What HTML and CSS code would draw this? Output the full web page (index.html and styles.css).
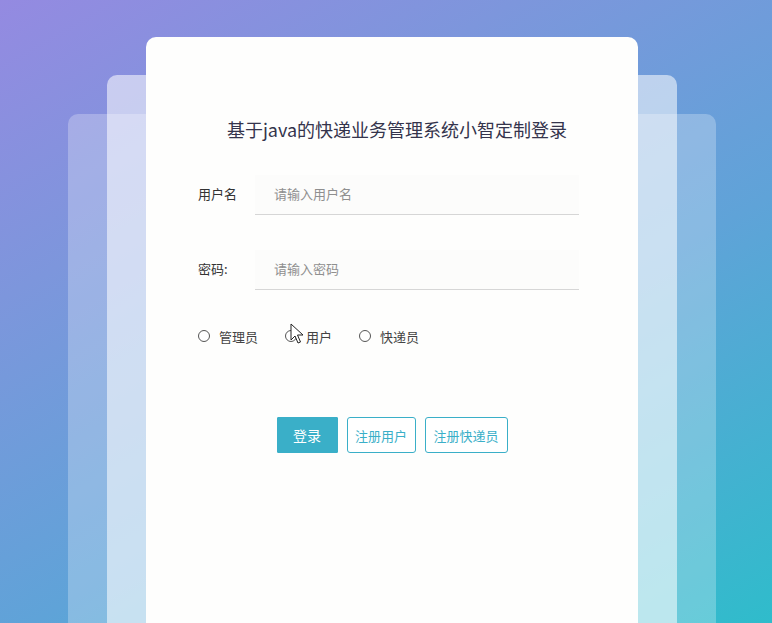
FILE: index.html
```html
<!DOCTYPE html>
<html lang="zh-CN">
<head>
<meta charset="utf-8">
<title>登录</title>
<link rel="stylesheet" href="styles.css">
</head>
<body>
<div class="page">
  <div class="stack">
    <div class="layer layer-back"></div>
    <div class="layer layer-mid"></div>
    <div class="card">
      <h1 class="title">基于java的快递业务管理系统小智定制登录</h1>
      <form class="form">
        <div class="field">
          <label class="label">用户名</label>
          <input class="input" type="text" placeholder="请输入用户名">
        </div>
        <div class="field">
          <label class="label">密码:</label>
          <input class="input" type="password" placeholder="请输入密码">
        </div>
        <div class="roles">
          <label class="role"><span class="radio"></span><span>管理员</span></label>
          <label class="role"><span class="radio"></span><span>用户</span></label>
          <label class="role"><span class="radio"></span><span>快递员</span></label>
        </div>
        <div class="actions">
          <button type="button" class="btn btn-primary">登录</button>
          <button type="button" class="btn btn-outline btn-user">注册用户</button>
          <button type="button" class="btn btn-outline btn-courier">注册快递员</button>
        </div>
      </form>
    </div>
  </div>
  <svg class="cursor" width="14" height="22" viewBox="0 0 14 22"><path d="M1 1 L1 17 L5 13 L8 20 L10.5 19 L7.5 12 L13 12 Z" fill="#fff" stroke="#222" stroke-width="1" stroke-linejoin="round"/></svg>
</div>
</body>
</html>
```
FILE: styles.css
```css
html, body {
  margin: 0;
  padding: 0;
  height: 100%;
}
body {
  font-family: "Noto Sans CJK SC", "Noto Sans", sans-serif;
  background: linear-gradient(150deg, #948ae1 0%, #7d96dc 28%, #5fa3d8 60%, #2fbccb 100%);
  overflow: hidden;
}
.page {
  position: relative;
  height: 623px;
  overflow: hidden;
}
.stack {
  position: relative;
  width: 492px;
  margin-left: 146px;
  padding-top: 37px;
}
.layer {
  position: absolute;
  border-radius: 10px;
  height: 700px;
}
.layer-back {
  left: -78px;
  top: 114px;
  width: 648px;
  background: rgba(255, 255, 255, 0.26);
}
.layer-mid {
  left: -39px;
  top: 75px;
  width: 570px;
  background: rgba(255, 255, 255, 0.55);
}
.card {
  position: relative;
  background: #fefefd;
  border-radius: 10px;
  height: 640px;
}
.title {
  margin: 0;
  padding: 80px 0 0 10px;
  text-align: center;
  font-size: 18px;
  line-height: 24px;
  font-weight: 400;
  color: #34344c;
}
.form {
  padding: 34px 0 0 52px;
}
.field {
  display: flex;
  align-items: center;
  height: 40px;
  margin-bottom: 35px;
}
.label {
  width: 57px;
  font-size: 13px;
  line-height: 16px;
  margin-top: -2px;
  color: #333;
}
.input {
  width: 324px;
  height: 40px;
  box-sizing: border-box;
  border: none;
  border-bottom: 1px solid #d6d6d6;
  background: #fcfcfb;
  padding: 0 0 2px 19px;
  font-family: inherit;
  font-size: 13px;
  color: #333;
  outline: none;
}
.input::placeholder {
  color: #8f8f8f;
}
.roles {
  display: flex;
  align-items: center;
  margin-top: 38px;
  height: 16px;
  font-size: 13px;
  color: #444;
}
.role {
  display: flex;
  align-items: center;
  margin-right: 27px;
}
.radio {
  width: 10px;
  height: 10px;
  border: 1px solid #555;
  border-radius: 50%;
  background: #fff;
  margin-right: 9px;
}
.actions {
  display: flex;
  justify-content: center;
  gap: 9px;
  margin: 73px 0 0 -52px;
}
.btn {
  height: 36px;
  box-sizing: border-box;
  font-family: inherit;
  border-radius: 3px;
  padding: 0;
  cursor: pointer;
}
.btn-primary {
  width: 61px;
  border: 1px solid #3aafc8;
  background: #3aafc8;
  color: #fff;
  font-size: 14px;
  border-radius: 1px;
}
.btn-outline {
  border: 1px solid #3aafc8;
  background: #fff;
  color: #3aafc8;
  font-size: 13px;
}
.btn-user {
  width: 69px;
}
.btn-courier {
  width: 83px;
}
.cursor {
  position: absolute;
  left: 290px;
  top: 323px;
}
```
